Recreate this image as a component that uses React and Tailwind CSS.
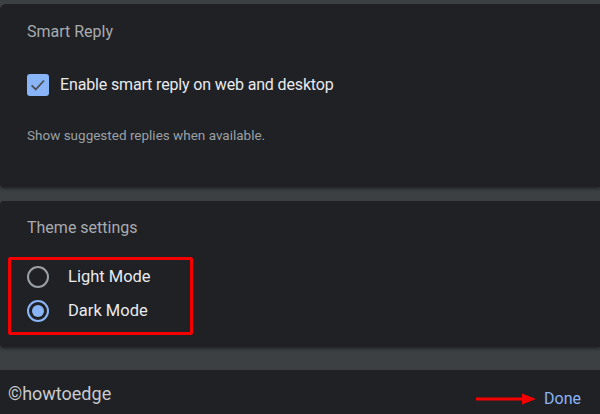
const Checkbox = () => (
  <div className="w-[22px] h-[22px] rounded-[3px] bg-[#8ab4f8] flex items-center justify-center">
    <svg width="18" height="18" viewBox="0 0 24 24" fill="none">
      <path d="M3.5 12.5l5.5 5.5 11-12" stroke="#4a4e54" strokeWidth="2.4" />
    </svg>
  </div>
);

const Radio = ({ checked }) => (
  <div
    className={`w-[22px] h-[22px] rounded-full border-2 flex items-center justify-center ${
      checked ? 'border-[#8ab4f8]' : 'border-[#9aa0a6]'
    }`}
  >
    {checked && <div className="w-[12px] h-[12px] rounded-full bg-[#8ab4f8]" />}
  </div>
);

export default function App() {
  return (
    <div
      className="w-[600px] h-[414px] bg-[#3c4043] flex flex-col overflow-hidden pt-[4px]"
      style={{ fontFamily: 'Roboto, "Noto Sans", sans-serif' }}
    >
      {/* Smart reply card */}
      <div className="h-[183px] shrink-0 bg-[#202124] rounded-tl-md rounded-bl-sm pl-[27px] pt-[18px] shadow-[0_2px_3px_rgba(0,0,0,0.4)]">
        <h2 className="text-[16px] leading-[20px] text-[#a8abb0]">Smart Reply</h2>
        <div className="flex items-center gap-[11px] mt-[32px]">
          <Checkbox />
          <span className="text-[16px] leading-[22px] tracking-[-0.15px] text-[#e8eaed]">
            Enable smart reply on web and desktop
          </span>
        </div>
        <p className="text-[13.5px] leading-[18px] text-[#9aa0a6] mt-[30px]">
          Show suggested replies when available.
        </p>
      </div>

      {/* Theme card */}
      <div className="h-[146px] shrink-0 mt-[14px] bg-[#202124] rounded-l-sm pl-[27px] pt-[17px] shadow-[0_2px_3px_rgba(0,0,0,0.4)]">
        <h2 className="text-[16px] leading-[20px] text-[#a8abb0]">Theme settings</h2>
        <div className="-ml-[19px] mt-[19px] w-[185px] border-[3px] border-[#f50000] rounded-[2px] pl-[16px] pt-[6px] pb-[10px] flex flex-col gap-[12px]">
          <div className="flex items-center gap-[19px]">
            <Radio />
            <span className="text-[16.5px] leading-[22px] text-[#e8eaed]">Light Mode</span>
          </div>
          <div className="flex items-center gap-[19px]">
            <Radio checked />
            <span className="text-[16.5px] leading-[22px] text-[#e8eaed]">Dark Mode</span>
          </div>
        </div>
      </div>

      <div className="h-[23px] shrink-0" />

      {/* Footer */}
      <div className="flex-1 bg-[#202124] flex justify-between items-start">
        <span className="ml-[8px] mt-[13px] text-[18px] leading-[22px] text-[#c8cacd]">©howtoedge</span>
        <div className="flex items-center mt-[19px] mr-[19px]">
          <svg width="60" height="12" viewBox="0 0 60 12">
            <rect x="0" y="4.5" width="48" height="3" fill="#f50000" />
            <path d="M46 0.5L60 6L46 11.5Z" fill="#f50000" />
          </svg>
          <span className="ml-[8px] text-[16px] leading-[20px] text-[#8ab4f8]">Done</span>
        </div>
      </div>
    </div>
  );
}
